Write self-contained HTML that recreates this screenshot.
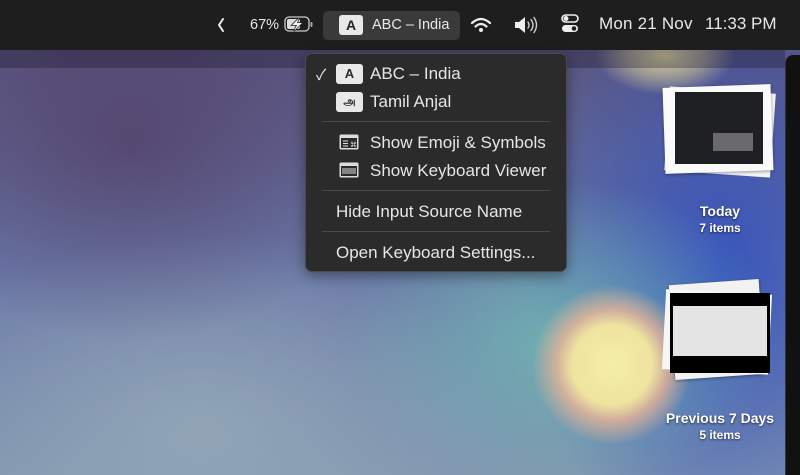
<!DOCTYPE html>
<html><head><meta charset="utf-8"><style>
*{margin:0;padding:0;box-sizing:border-box}
body{width:800px;height:475px;overflow:hidden;position:relative;font-family:"Liberation Sans","Noto Sans CJK JP",sans-serif;background:#5a6a98}
#wall{position:absolute;left:0;top:50px;width:800px;height:425px;
background:
radial-gradient(circle at 612px 315px,#f4eea8 0,#efe3a0 40px,rgba(235,180,150,.8) 55px,rgba(120,170,170,0) 80px),
radial-gradient(ellipse 70px 40px at 665px 5px,#d8cfa0 0,rgba(200,190,150,.6) 40px,rgba(0,0,0,0) 70px),
radial-gradient(ellipse 220px 160px at 560px 290px,rgba(110,190,180,.75),rgba(0,0,0,0)),
radial-gradient(ellipse 260px 200px at 130px 90px,rgba(80,60,100,.7),rgba(0,0,0,0)),
radial-gradient(ellipse 300px 200px at 200px 380px,rgba(150,170,185,.8),rgba(0,0,0,0)),
radial-gradient(ellipse 200px 300px at 720px 220px,rgba(50,80,190,.9),rgba(0,0,0,0)),
linear-gradient(180deg,#5a5680 0,#6a78a8 50%,#8296b0 100%);}
#band{position:absolute;left:0;top:50px;width:785px;height:18px;background:rgba(20,15,35,.3)}
#bar{position:absolute;left:0;top:0;width:800px;height:50px;background:#1e1e1f;color:#e8e8e8;font-size:15.5px}
.t{position:absolute;top:15px;white-space:nowrap}
#win{position:absolute;left:785px;top:55px;width:20px;height:420px;background:#111;border-radius:8px 0 0 0;border-left:1px solid #333}
#menu{position:absolute;left:305px;top:53px;width:262px;height:219px;background:#2b2b2c;border:1px solid #4a4a4c;border-radius:7px;box-shadow:0 4px 14px rgba(0,0,0,.4);color:#e6e6e6;font-size:17px}
.it{position:absolute;left:64px;white-space:nowrap}
.sep{position:absolute;left:16px;width:228px;height:1px;background:#4a4a4c}
.key{position:absolute;left:30px;width:27px;height:20px;background:#e8e8e8;border-radius:3px;color:#2b2b2c;font-weight:bold;font-size:13px;text-align:center;line-height:20px}
.lbl{position:absolute;color:#fff;font-weight:bold;text-align:center;width:140px;text-shadow:0 1px 2px rgba(0,0,0,.6)}
</style></head><body>
<div id="wall"></div><div id="band"></div>
<div id="win"></div>
<div id="bar">
<svg style="position:absolute;left:216px;top:17px" width="10" height="16" viewBox="0 0 10 16"><path d="M7 2 L3 8 L7 14" fill="none" stroke="#eee" stroke-width="2" stroke-linecap="round" stroke-linejoin="round"/></svg>
<span class="t" style="left:250px;font-size:14.5px;top:17px">67%</span>
<svg style="position:absolute;left:284px;top:16px" width="30" height="17" viewBox="0 0 30 17"><rect x="1" y="1" width="24" height="14" rx="4" fill="none" stroke="#ccc" stroke-width="1.3"/><rect x="3" y="3" width="13" height="10" rx="2" fill="#ddd"/><rect x="26.5" y="6" width="2" height="5" rx="1" fill="#aaa"/><path d="M15 2 L8 9 L13 9 L10 15 L18 7 L13 7 Z" fill="#1e1e1f" stroke="#1e1e1f" stroke-width="1.5"/><path d="M15 2 L8 9 L13 9 L10 15 L18 7 L13 7 Z" fill="#eee"/></svg>
<div style="position:absolute;left:323px;top:11px;width:137px;height:29px;background:#3a3a3b;border-radius:5px"></div>
<div style="position:absolute;left:339px;top:15px;width:24px;height:20px;background:#e8e8e8;border-radius:3px;color:#222;font-weight:bold;font-size:14px;text-align:center;line-height:20px">A</div>
<span class="t" style="left:372px;font-size:14.5px;top:17px">ABC – India</span>
<svg style="position:absolute;left:470px;top:16px" width="22" height="18" viewBox="0 0 22 18"><path d="M2 7 Q11 -1 20 7" fill="none" stroke="#eee" stroke-width="2.2" stroke-linecap="round"/><path d="M5.5 10.5 Q11 5.5 16.5 10.5" fill="none" stroke="#eee" stroke-width="2.2" stroke-linecap="round"/><circle cx="11" cy="14" r="2" fill="#eee"/></svg>
<svg style="position:absolute;left:514px;top:16px" width="26" height="18" viewBox="0 0 26 18"><path d="M1 6 H5 L11 1 V17 L5 12 H1 Z" fill="#eee"/><path d="M14 6 Q16 9 14 12 M17 3.5 Q21 9 17 14.5 M20 1.5 Q25 9 20 16.5" fill="none" stroke="#ccc" stroke-width="1.4" stroke-linecap="round"/></svg>
<svg style="position:absolute;left:561px;top:13px" width="18" height="22" viewBox="0 0 18 22"><rect x="1" y="2" width="16" height="7" rx="3.5" fill="none" stroke="#eee" stroke-width="1.6"/><circle cx="5" cy="5.5" r="2.5" fill="#eee"/><rect x="1" y="12" width="16" height="7" rx="3.5" fill="#eee"/><circle cx="13" cy="15.5" r="2.3" fill="#1e1e1f"/></svg>
<span class="t" style="left:599px;font-size:17px;top:14px;letter-spacing:.2px">Mon 21 Nov</span>
<span class="t" style="left:705px;font-size:17px;top:14px">11:33 PM</span>
</div>
<div id="menu">
<span style="position:absolute;left:10px;top:10px;font-size:15px">&#x2713;</span>
<div class="key" style="top:10px">A</div>
<span class="it" style="top:10px">ABC – India</span>
<div class="key" style="top:38px;font-size:11px">அ</div>
<span class="it" style="top:38px">Tamil Anjal</span>
<div class="sep" style="top:67px"></div>
<svg style="position:absolute;left:33px;top:80px" width="20" height="16" viewBox="0 0 20 16"><rect x="0.5" y="0.5" width="19" height="15" rx="1.5" fill="#ddd"/><rect x="2" y="4" width="16" height="10" fill="#2b2b2c"/><path d="M4 7h5M4 9.5h5M4 12h5" stroke="#ddd" stroke-width="1"/><text x="11" y="13" font-size="7" fill="#ddd" font-family="DejaVu Sans">⌘</text></svg>
<span class="it" style="top:79px">Show Emoji &amp; Symbols</span>
<svg style="position:absolute;left:33px;top:108px" width="20" height="16" viewBox="0 0 20 16"><rect x="0.5" y="0.5" width="19" height="15" rx="1.5" fill="#ddd"/><rect x="2" y="4" width="16" height="10" fill="#2b2b2c"/><path d="M4 6v6M6 6v6M8 6v6M10 6v6M12 6v6M14 6v6M16 6v6" stroke="#ddd" stroke-width="1"/></svg>
<span class="it" style="top:107px">Show Keyboard Viewer</span>
<div class="sep" style="top:136px"></div>
<span class="it" style="top:148px;left:30px">Hide Input Source Name</span>
<div class="sep" style="top:177px"></div>
<span class="it" style="top:189px;left:30px">Open Keyboard Settings...</span>
</div>
<div style="position:absolute;left:667px;top:90px;width:106px;height:84px;background:#f4f4f4;transform:rotate(4deg)"></div>
<div style="position:absolute;left:664px;top:86px;width:108px;height:86px;background:#fafafa;transform:rotate(-2deg);box-shadow:0 1px 3px rgba(0,0,0,.4)"></div>
<div style="position:absolute;left:675px;top:92px;width:88px;height:72px;background:#1f2022"></div>
<div style="position:absolute;left:713px;top:133px;width:40px;height:18px;background:#6a6a6c"></div>
<div class="lbl" style="left:650px;top:203px;font-size:14px">Today</div>
<div class="lbl" style="left:650px;top:221px;font-size:12px">7 items</div>
<div style="position:absolute;left:672px;top:282px;width:90px;height:95px;background:#f2f2f2;transform:rotate(-4deg);box-shadow:0 1px 3px rgba(0,0,0,.4)"></div>
<div style="position:absolute;left:664px;top:292px;width:106px;height:80px;background:#f6f6f6;transform:rotate(3deg)"></div>
<div style="position:absolute;left:670px;top:293px;width:100px;height:80px;background:#000"></div>
<div style="position:absolute;left:673px;top:306px;width:94px;height:50px;background:#e4e4e4"></div>
<div class="lbl" style="left:650px;top:410px;font-size:14px">Previous 7 Days</div>
<div class="lbl" style="left:650px;top:428px;font-size:12px">5 items</div>
</body></html>
